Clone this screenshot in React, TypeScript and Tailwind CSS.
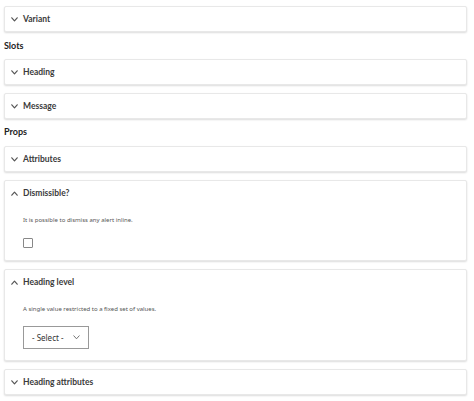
type Item = { label: string; open?: boolean; body?: React.ReactNode };

function Chevron({ up, className = 'text-[#555]', stroke = 1.2 }: { up?: boolean; className?: string; stroke?: number }) {
    return (
        <svg width="7" height="5" viewBox="0 0 7 5" className={`shrink-0 ${className}`}>
            <path
                d={up ? 'M0.8 4.2 L3.5 1.2 L6.2 4.2' : 'M0.8 0.8 L3.5 3.8 L6.2 0.8'}
                fill="none"
                stroke="currentColor"
                strokeWidth={stroke}
                strokeLinecap="round"
                strokeLinejoin="round"
            />
        </svg>
    );
}

function Panel({ label, open, body }: Item) {
    return (
        <div className="rounded-[2px] border border-[#e8e8e8] bg-white shadow-[0_1px_2px_rgba(0,0,0,0.14)]">
            <div className="flex h-[24px] items-center gap-[5px] pl-[6px]">
                <Chevron up={open} />
                <span className="font-['Lato',sans-serif] text-[8.5px] font-bold text-[#3b3b3b]">{label}</span>
            </div>
            {open && body}
        </div>
    );
}

export default function App() {
    return (
        <div
            className="min-h-[401px] bg-white pt-[6px] pr-[7px] pl-[4px]"
            style={{ fontFamily: '"Noto Sans", Lato, sans-serif' }}
        >
            <Panel label="Variant" />

            <h3 className="mt-[8px] mb-[7px] font-['Lato',sans-serif] text-[9px] leading-[12px] font-bold text-[#222]">Slots</h3>
            <div className="flex flex-col gap-[8px]">
                <Panel label="Heading" />
                <Panel label="Message" />
            </div>

            <h3 className="mt-[7px] mb-[8px] font-['Lato',sans-serif] text-[9px] leading-[12px] font-bold text-[#222]">Props</h3>
            <div className="flex flex-col gap-[8px]">
                <Panel label="Attributes" />
                <Panel
                    label="Dismissible?"
                    open
                    body={
                        <div className="px-[18px] pt-[11px] pb-[12px]">
                            <p className="text-[6px] leading-[8px] text-[#555]">It is possible to dismiss any alert inline.</p>
                            <div className="mt-[14px] h-[10px] w-[10px] rounded-[1px] border border-[#888] bg-white" />
                        </div>
                    }
                />
                <Panel
                    label="Heading level"
                    open
                    body={
                        <div className="px-[18px] pt-[11px] pb-[11px]">
                            <p className="text-[6px] leading-[8px] text-[#555]">A single value restricted to a fixed set of values.</p>
                            <div className="mt-[13px] flex h-[23px] w-[66px] items-center justify-between border border-[#999] bg-white pr-[8px] pl-[8px]">
                                <span className="text-[8px] text-[#333]">- Select -</span>
                                <Chevron className="text-[#666]" stroke={0.9} />
                            </div>
                        </div>
                    }
                />
                <Panel label="Heading attributes" />
            </div>
        </div>
    );
}
